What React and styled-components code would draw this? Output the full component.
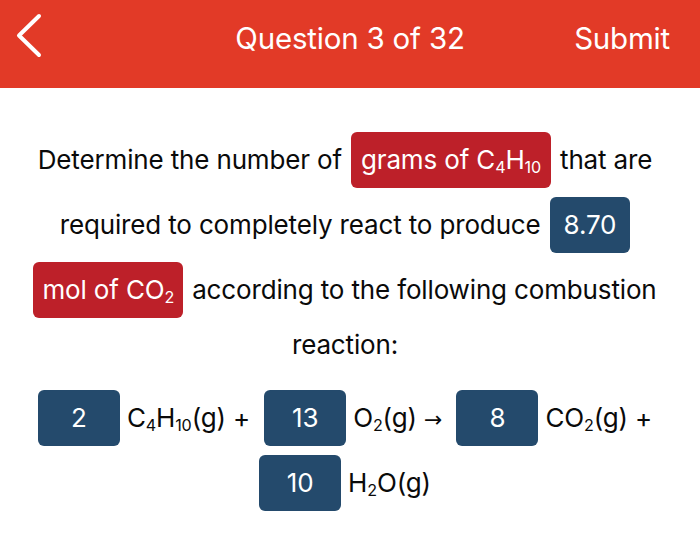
import React from "react";
import styled, { createGlobalStyle } from "styled-components";

const Global = createGlobalStyle`
  html, body { margin: 0; padding: 0; background: #fff; }
  body { font-family: Inter, "Liberation Sans", sans-serif; -webkit-font-smoothing: antialiased; }
`;

const Page = styled.div`
  width: 700px;
  height: 533px;
  overflow: hidden;
  background: #fff;
`;

const Header = styled.header`
  height: 88px;
  background: #e23a27;
  display: grid;
  grid-template-columns: 1fr auto 1fr;
  align-items: center;
  color: #fff;
  padding: 0 30px 13px 14px;
  box-sizing: border-box;
`;

const Back = styled.button`
  justify-self: start;
  background: none;
  border: 0;
  padding: 0;
  margin-top: -5px;
  display: flex;
  cursor: pointer;
`;

const Title = styled.h1`
  margin: 0;
  font-weight: 400;
  font-size: 29.5px;
  letter-spacing: -0.2px;
  padding-left: 16px;
`;

const Submit = styled.button`
  justify-self: end;
  background: none;
  border: 0;
  padding: 0;
  color: #fff;
  font: inherit;
  font-size: 29.5px;
  letter-spacing: -0.2px;
`;

const Body = styled.main`
  padding: 39px 10px 0 0;
  color: #0a0a0a;
  font-size: 26px;
  letter-spacing: -0.15px;
`;

const Line = styled.div`
  display: flex;
  justify-content: center;
  align-items: center;
  gap: ${(p) => p.$gap ?? 9}px;
  height: ${(p) => p.$h ?? 65}px;
`;

const Pill = styled.span`
  display: inline-flex;
  align-items: center;
  justify-content: center;
  height: 56px;
  box-sizing: border-box;
  padding: 0 ${(p) => p.$pad ?? 9}px;
  min-width: ${(p) => p.$w ?? 0}px;
  border-radius: 6px;
  color: #fff;
  background: ${(p) => (p.$tone === "red" ? "#bd2029" : "#244a6c")};
`;

const Eq = styled.div`
  margin-top: 18px;
`;

const Sub = styled.sub`
  font-size: 0.62em;
  vertical-align: -0.22em;
  line-height: 0;
`;

const Species = styled.span`
  white-space: pre;
`;

const Arrow = styled.span`
  font-family: "DejaVu Sans", sans-serif;
  font-size: 22px;
`;

function Chevron() {
  return (
    <svg width="30" height="46" viewBox="0 0 30 46">
      <path d="M25 4 L5 23.5 L25 43" fill="none" stroke="#fff" strokeWidth="4" strokeLinecap="round" strokeLinejoin="round" />
    </svg>
  );
}

export default function App() {
  return (
    <Page>
      <Global />
      <Header>
        <Back aria-label="Back"><Chevron /></Back>
        <Title>Question 3 of 32</Title>
        <Submit>Submit</Submit>
      </Header>
      <Body>
        <Line>
          <span>Determine the number of</span>
          <Pill $tone="red" $pad={10}><span>grams of C<Sub>4</Sub>H<Sub>10</Sub></span></Pill>
          <span>that are</span>
        </Line>
        <Line>
          <span>required to completely react to produce</span>
          <Pill $tone="blue" $pad={14}>8.70</Pill>
        </Line>
        <Line>
          <Pill $tone="red"><span>mol of CO<Sub>2</Sub></span></Pill>
          <span>according to the following combustion</span>
        </Line>
        <Line $h={45}>
          <span>reaction:</span>
        </Line>
        <Eq>
          <Line $gap={7}>
            <Pill $w={82}>2</Pill>
            <Species>C<Sub>4</Sub>H<Sub>10</Sub>(g) + </Species>
            <Pill $w={82}>13</Pill>
            <Species>O<Sub>2</Sub>(g) <Arrow>→</Arrow> </Species>
            <Pill $w={82}>8</Pill>
            <Species>CO<Sub>2</Sub>(g) +</Species>
          </Line>
          <Line $gap={7}>
            <Pill $w={82}>10</Pill>
            <Species>H<Sub>2</Sub>O(g)</Species>
          </Line>
        </Eq>
      </Body>
    </Page>
  );
}
